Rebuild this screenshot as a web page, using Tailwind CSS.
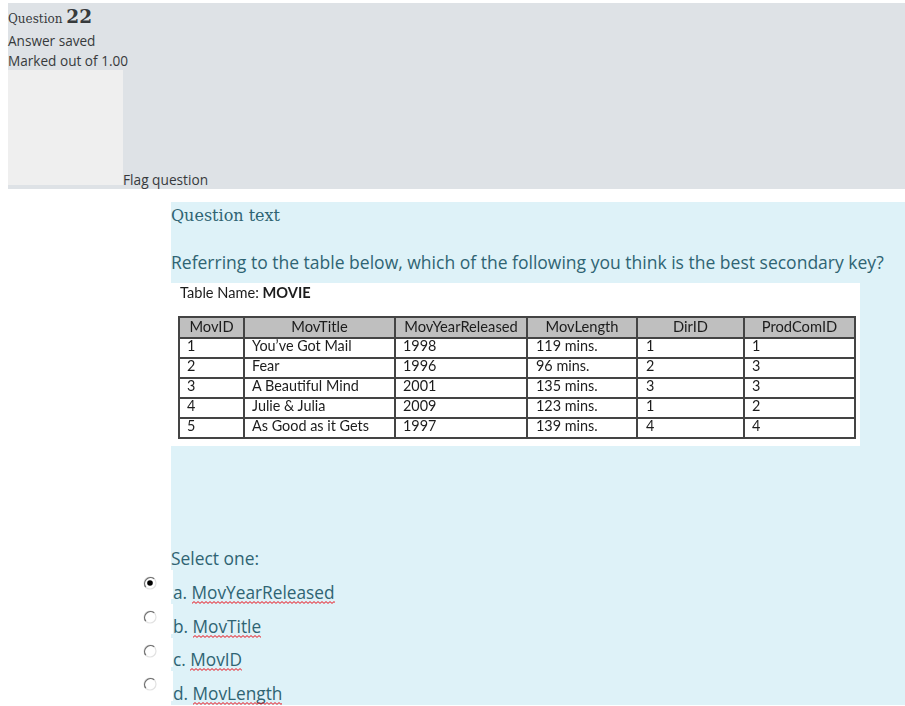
<!DOCTYPE html>
<html>
<head>
<meta charset="utf-8">
<script src="https://cdn.jsdelivr.net/npm/@tailwindcss/browser@4"></script>
</head>
<body class="bg-white">
<svg class="absolute w-0 h-0"><defs><pattern id="wave" width="4" height="3" patternUnits="userSpaceOnUse"><path d="M0 2.4L2 .6L4 2.4" fill="none" stroke="#e8111b" stroke-width="1"/></pattern></defs></svg>
<div class="w-[905px] h-[706px] overflow-hidden pt-[3px] pl-2 font-['Open_Sans',sans-serif] text-[#373a3c]">
  <div class="h-[186px] bg-[#dee2e6] flex flex-col">
    <h3 class="h-[28px] pt-[1px] font-['DejaVu_Serif',serif] text-[12px] leading-[26px] font-normal">Question <span class="font-bold text-[18.5px]">22</span></h3>
    <div class="h-[20px] text-[13.6px] leading-[20px]">Answer saved</div>
    <div class="h-[19px] text-[13.6px] leading-[20px]">Marked out of 1.00</div>
    <div class="flex items-end">
      <div class="w-[115px] h-[115px] bg-[#efefef] shrink-0"></div>
      <div class="text-[13.7px] leading-[18px] -mb-[4px]">Flag question</div>
    </div>
  </div>
  <div class="ml-[163px] mt-[13px] bg-[#def2f8] h-[503px] text-[#2f6473]">
    <h4 class="h-[46px] pt-[1px] font-['DejaVu_Serif',serif] text-[16px] leading-[25px] font-normal">Question text</h4>
    <p class="h-[35px] text-[17.53px] leading-[28px]">Referring to the table below, which of the following you think is the best secondary key?</p>
    <div class="w-[689px] h-[163px] bg-white pt-[1px] font-['Lato',sans-serif] text-[#1c1c1c] blur-[0.3px]">
      <div class="pl-[9px] h-[32px] text-[14.6px] leading-[17px]">Table Name: <b>MOVIE</b></div>
      <table class="ml-[7px] w-[676px] table-fixed border-collapse border-2 border-[#555] text-[14.4px] leading-[15px]">
        <colgroup><col class="w-[65px]"><col class="w-[151px]"><col class="w-[132px]"><col class="w-[110px]"><col class="w-[107px]"><col class="w-[111px]"></colgroup>
        <thead>
          <tr class="h-[21px] bg-[#bfbfbf] text-[14.7px]">
            <th class="border-2 border-[#444] font-normal pb-[2px]">MovID</th>
            <th class="border-2 border-[#444] font-normal pb-[2px]">MovTitle</th>
            <th class="border-2 border-[#444] font-normal pb-[2px]">MovYearReleased</th>
            <th class="border-2 border-[#444] font-normal pb-[2px]">MovLength</th>
            <th class="border-2 border-[#444] font-normal pb-[2px]">DirID</th>
            <th class="border-2 border-[#444] font-normal pb-[2px]">ProdComID</th>
          </tr>
        </thead>
        <tbody class="leading-[13px]">
          <tr class="h-5">
            <td class="border-2 border-[#444] pl-[7px] pb-[5px]">1</td><td class="border-2 border-[#444] pl-[7px] pb-[5px]">You’ve Got Mail</td><td class="border-2 border-[#444] pl-[7px] pb-[5px]">1998</td><td class="border-2 border-[#444] pl-[8px] pb-[5px]">119 mins.</td><td class="border-2 border-[#444] pl-[8px] pb-[5px]">1</td><td class="border-2 border-[#444] pl-[7px] pb-[5px]">1</td>
          </tr>
          <tr class="h-5">
            <td class="border-2 border-[#444] pl-[7px] pb-[5px]">2</td><td class="border-2 border-[#444] pl-[7px] pb-[5px]">Fear</td><td class="border-2 border-[#444] pl-[7px] pb-[5px]">1996</td><td class="border-2 border-[#444] pl-[8px] pb-[5px]">96 mins.</td><td class="border-2 border-[#444] pl-[8px] pb-[5px]">2</td><td class="border-2 border-[#444] pl-[7px] pb-[5px]">3</td>
          </tr>
          <tr class="h-5">
            <td class="border-2 border-[#444] pl-[7px] pb-[5px]">3</td><td class="border-2 border-[#444] pl-[7px] pb-[5px]">A Beautiful Mind</td><td class="border-2 border-[#444] pl-[7px] pb-[5px]">2001</td><td class="border-2 border-[#444] pl-[8px] pb-[5px]">135 mins.</td><td class="border-2 border-[#444] pl-[8px] pb-[5px]">3</td><td class="border-2 border-[#444] pl-[7px] pb-[5px]">3</td>
          </tr>
          <tr class="h-5">
            <td class="border-2 border-[#444] pl-[7px] pb-[5px]">4</td><td class="border-2 border-[#444] pl-[7px] pb-[5px]">Julie &amp; Julia</td><td class="border-2 border-[#444] pl-[7px] pb-[5px]">2009</td><td class="border-2 border-[#444] pl-[8px] pb-[5px]">123 mins.</td><td class="border-2 border-[#444] pl-[8px] pb-[5px]">1</td><td class="border-2 border-[#444] pl-[7px] pb-[5px]">2</td>
          </tr>
          <tr class="h-5">
            <td class="border-2 border-[#444] pl-[7px] pb-[5px]">5</td><td class="border-2 border-[#444] pl-[7px] pb-[5px]">As Good as it Gets</td><td class="border-2 border-[#444] pl-[7px] pb-[5px]">1997</td><td class="border-2 border-[#444] pl-[8px] pb-[5px]">139 mins.</td><td class="border-2 border-[#444] pl-[8px] pb-[5px]">4</td><td class="border-2 border-[#444] pl-[7px] pb-[5px]">4</td>
          </tr>
        </tbody>
      </table>
    </div>
    <div class="h-[124px] flex items-end text-[17.4px] leading-[24px]"><span class="h-[24px]">Select one:</span></div>
    <div class="-ml-[30px] flex flex-col text-[17.25px]">
      <div class="h-[34px] flex">
        <div class="w-[32px] h-[29px] bg-white flex pl-[2px] pt-[6px] shrink-0">
          <svg width="14" height="14" viewBox="0 0 14 14"><circle cx="7" cy="7" r="6" fill="#fff" stroke="#e2e2e2" stroke-width="1.2"/><path d="M2.8 11.2A6 6 0 0 1 11.2 2.8" fill="none" stroke="#707070" stroke-width="1.3"/><circle cx="7" cy="7" r="2.8" fill="#000"/></svg>
        </div>
        <div class="leading-[28px] pt-[9px]">a. <span class="relative">MovYearReleased<svg class="absolute left-0 bottom-0 w-full h-[3px]"><rect width="100%" height="3" fill="url(#wave)"/></svg></span></div>
      </div>
      <div class="h-[33.5px] flex">
        <div class="w-[32px] h-[29.5px] bg-white flex pl-[2px] pt-[6px] shrink-0">
          <svg width="14" height="14" viewBox="0 0 14 14"><circle cx="7" cy="7" r="6" fill="#fff" stroke="#e2e2e2" stroke-width="1.2"/><path d="M2.8 11.2A6 6 0 0 1 11.2 2.8" fill="none" stroke="#707070" stroke-width="1.3"/></svg>
        </div>
        <div class="leading-[28px] pt-[9px]">b. <span class="relative">MovTitle<svg class="absolute left-0 bottom-0 w-full h-[3px]"><rect width="100%" height="3" fill="url(#wave)"/></svg></span></div>
      </div>
      <div class="h-[33.5px] flex">
        <div class="w-[32px] h-[29.5px] bg-white flex pl-[2px] pt-[6px] shrink-0">
          <svg width="14" height="14" viewBox="0 0 14 14"><circle cx="7" cy="7" r="6" fill="#fff" stroke="#e2e2e2" stroke-width="1.2"/><path d="M2.8 11.2A6 6 0 0 1 11.2 2.8" fill="none" stroke="#707070" stroke-width="1.3"/></svg>
        </div>
        <div class="leading-[28px] pt-[8px]">c. <span class="relative">MovID<svg class="absolute left-0 bottom-0 w-full h-[3px]"><rect width="100%" height="3" fill="url(#wave)"/></svg></span></div>
      </div>
      <div class="h-[34px] flex overflow-hidden">
        <div class="w-[32px] h-[30px] bg-white flex pl-[2px] pt-[6px] shrink-0">
          <svg width="14" height="14" viewBox="0 0 14 14"><circle cx="7" cy="7" r="6" fill="#fff" stroke="#e2e2e2" stroke-width="1.2"/><path d="M2.8 11.2A6 6 0 0 1 11.2 2.8" fill="none" stroke="#707070" stroke-width="1.3"/></svg>
        </div>
        <div class="leading-[28px] pt-[9px]">d. <span class="relative">MovLength<svg class="absolute left-0 bottom-0 w-full h-[3px]"><rect width="100%" height="3" fill="url(#wave)"/></svg></span></div>
      </div>
    </div>
  </div>
</div>
</body>
</html>
